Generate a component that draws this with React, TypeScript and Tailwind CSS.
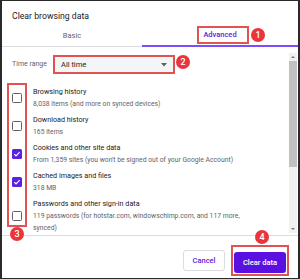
import React from 'react';

const Badge: React.FC<{ n: number; className: string }> = ({ n, className }) => (
  <div
    className={`absolute w-[14px] h-[14px] rounded-full bg-[#e8363c] text-white text-[9px] leading-[14px] text-center font-medium ${className}`}
  >
    {n}
  </div>
);

const Checkbox: React.FC<{ checked?: boolean }> = ({ checked }) =>
  checked ? (
    <div className="w-[10px] h-[10px] rounded-[1.5px] bg-[#5a22e0] flex items-center justify-center">
      <svg width="8" height="8" viewBox="0 0 24 24" fill="none" stroke="white" strokeWidth="3.5">
        <path d="M4 12.5l5 5L20 6.5" />
      </svg>
    </div>
  ) : (
    <div className="w-[10px] h-[10px] rounded-[1.5px] border-[1.5px] border-[#5f6368]" />
  );

const items = [
  { title: 'Browsing history', sub: ['8,038 items (and more on synced devices)'], checked: false },
  { title: 'Download history', sub: ['165 items'], checked: false },
  {
    title: 'Cookies and other site data',
    sub: ["From 1,359 sites (you won't be signed out of your Google Account)"],
    checked: true,
  },
  { title: 'Cached images and files', sub: ['318 MB'], checked: true },
  {
    title: 'Passwords and other sign-in data',
    sub: ['119 passwords (for hotstar.com, windowschimp.com, and 117 more,', 'synced)'],
    checked: false,
  },
];

export default function App() {
  return (
    <div
      className="relative w-[300px] h-[279px] bg-white border-x-2 border-y border-[#2a2a2a] overflow-hidden flex flex-col"
      style={{ fontFamily: 'Roboto, "Noto Sans", sans-serif' }}
    >
      {/* Title */}
      <div className="h-[24px] pl-[10px] pt-[10px] text-[8.7px] leading-[11px] text-[#202124]">
        Clear browsing data
      </div>

      {/* Tabs */}
      <div className="flex h-[22px] border-b border-[#dadce0]">
        <div className="w-[140px] flex items-center justify-center text-[7.5px] text-[#5f6368]">Basic</div>
        <div className="flex-1 flex items-center justify-center text-[7.5px] font-medium text-[#5a22e0] border-b-2 border-[#7c4dff] -mb-px">
          Advanced
        </div>
      </div>

      {/* Body */}
      <div className="flex-1 flex min-h-0">
        <div className="flex-1 pl-[10px] pr-[6px] overflow-hidden">
          <div className="flex items-center mt-[8px] h-[19px]">
            <span className="text-[7px] text-[#5f6368] w-[41px]">Time range</span>
            <div className="w-[122px] h-[19px] border-2 border-[#e05353] bg-[#f4f5f6] flex items-center justify-between pl-[6px] pr-[6px]">
              <span className="text-[7.5px] text-[#202124]">All time</span>
              <svg width="6" height="4" viewBox="0 0 6 4">
                <path d="M0 0h6L3 3.5z" fill="#5f6368" />
              </svg>
            </div>
          </div>
          <div className="flex flex-col gap-[4px] mt-[12px]">
            {items.map((it) => (
              <div key={it.title} className="flex items-center">
                <div className="w-[21px] shrink-0">
                  <Checkbox checked={it.checked} />
                </div>
                <div className="leading-[12px] whitespace-nowrap">
                  <div className="text-[7.2px] text-[#202124]">{it.title}</div>
                  {it.sub.map((s) => (
                    <div key={s} className="text-[6.8px] text-[#5f6368]">
                      {s}
                    </div>
                  ))}
                </div>
              </div>
            ))}
          </div>
        </div>
        {/* Scrollbar */}
        <div className="w-[8px] mr-[1px] mt-[6px] mb-[2px] bg-[#f1f1f1] flex flex-col items-center">
          <svg width="8" height="8" viewBox="0 0 8 8">
            <path d="M2 5h4L4 3z" fill="#777" />
          </svg>
          <div className="w-[8px] h-[106px] bg-[#c1c1c1]" />
          <div className="flex-1" />
          <svg width="8" height="8" viewBox="0 0 8 8">
            <path d="M2 3h4L4 5z" fill="#777" />
          </svg>
        </div>
      </div>

      {/* Footer */}
      <div className="h-[43px] border-t border-[#dadce0] flex items-center justify-end gap-[6px] pr-[9px] pt-[7px]">
        <button className="w-[42px] h-[21px] rounded-[3px] border border-[#dadce0] text-[7.5px] font-medium text-[#5a22e0]">
          Cancel
        </button>
        <div className="border-2 border-[#e05353] p-px">
          <button className="w-[52px] h-[21px] rounded-[3px] bg-[#5a10e0] text-[7.5px] font-medium text-white">
            Clear data
          </button>
        </div>
      </div>

      {/* Annotations */}
      <div className="absolute left-[195px] top-[25px] w-[52px] h-[18px] border-2 border-[#e05353]" />
      <div className="absolute left-[5px] top-[82px] w-[20px] h-[144px] border-2 border-[#e05353]" />
      <Badge n={1} className="left-[249px] top-[27px]" />
      <Badge n={2} className="left-[174px] top-[54px]" />
      <Badge n={3} className="left-[8px] top-[226px]" />
      <Badge n={4} className="left-[253px] top-[229px]" />
    </div>
  );
}
